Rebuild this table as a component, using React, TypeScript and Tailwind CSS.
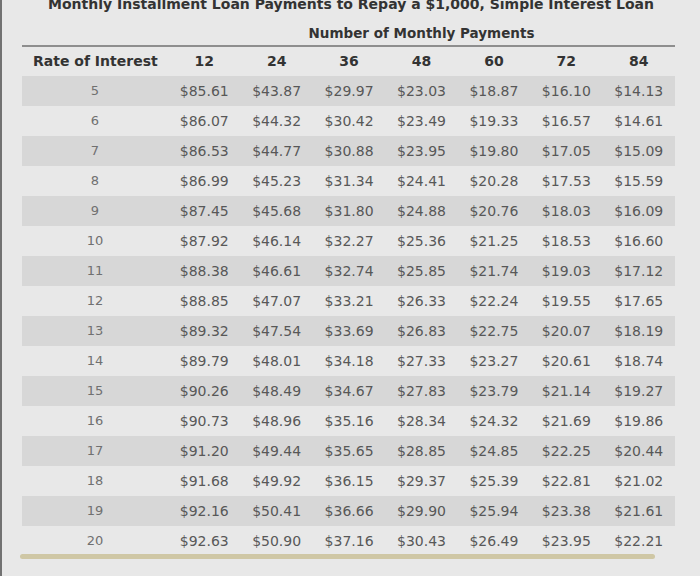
const columns = ["12", "24", "36", "48", "60", "72", "84"];

const rows: [number, string[]][] = [
  [5, ["85.61", "43.87", "29.97", "23.03", "18.87", "16.10", "14.13"]],
  [6, ["86.07", "44.32", "30.42", "23.49", "19.33", "16.57", "14.61"]],
  [7, ["86.53", "44.77", "30.88", "23.95", "19.80", "17.05", "15.09"]],
  [8, ["86.99", "45.23", "31.34", "24.41", "20.28", "17.53", "15.59"]],
  [9, ["87.45", "45.68", "31.80", "24.88", "20.76", "18.03", "16.09"]],
  [10, ["87.92", "46.14", "32.27", "25.36", "21.25", "18.53", "16.60"]],
  [11, ["88.38", "46.61", "32.74", "25.85", "21.74", "19.03", "17.12"]],
  [12, ["88.85", "47.07", "33.21", "26.33", "22.24", "19.55", "17.65"]],
  [13, ["89.32", "47.54", "33.69", "26.83", "22.75", "20.07", "18.19"]],
  [14, ["89.79", "48.01", "34.18", "27.33", "23.27", "20.61", "18.74"]],
  [15, ["90.26", "48.49", "34.67", "27.83", "23.79", "21.14", "19.27"]],
  [16, ["90.73", "48.96", "35.16", "28.34", "24.32", "21.69", "19.86"]],
  [17, ["91.20", "49.44", "35.65", "28.85", "24.85", "22.25", "20.44"]],
  [18, ["91.68", "49.92", "36.15", "29.37", "25.39", "22.81", "21.02"]],
  [19, ["92.16", "50.41", "36.66", "29.90", "25.94", "23.38", "21.61"]],
  [20, ["92.63", "50.90", "37.16", "30.43", "26.49", "23.95", "22.21"]],
];

export default function App() {
  return (
    <div className="w-[700px] h-[576px] overflow-hidden bg-[#e8e8e8] border-l-2 border-[#727272] font-['DejaVu_Sans',sans-serif]">
      <div className="-mt-[4px] text-center text-[14px] leading-[16px] font-bold text-[#333]">
        Monthly Installment Loan Payments to Repay a $1,000, Simple Interest Loan
      </div>

      <div className="ml-[20px] w-[653px]">
        <div className="grid grid-cols-[146px_repeat(7,minmax(0,1fr))]">
          <div className="col-start-2 col-span-7 pt-[13px] pb-[4px] text-center text-[13.5px] leading-[16px] font-bold text-[#333]">
            Number of Monthly Payments
          </div>
        </div>
        <div className="h-[2px] bg-[#8e8e8e]" />

        <div className="grid grid-cols-[146px_repeat(7,minmax(0,1fr))] h-[29px] items-center text-[14px] font-bold text-[#333]">
          <div className="pl-[11px]">Rate of Interest</div>
          {columns.map((c) => (
            <div key={c} className="text-center">
              {c}
            </div>
          ))}
        </div>

        {rows.map(([rate, values], i) => (
          <div
            key={rate}
            className={
              i % 2 === 0
                ? "grid grid-cols-[146px_repeat(7,minmax(0,1fr))] h-[30px] items-center bg-[#d7d7d7]"
                : "grid grid-cols-[146px_repeat(7,minmax(0,1fr))] h-[30px] items-center"
            }
          >
            <div className="text-center text-[13px] text-[#707070]">{rate}</div>
            {values.map((v, j) => (
              <div key={j} className="text-center text-[14px] text-[#585858]">
                ${v}
              </div>
            ))}
          </div>
        ))}

        <div className="-mt-[2px] -ml-[2px] w-[635px] h-[5px] rounded-full bg-[#cfc7a5]" />
      </div>
    </div>
  );
}
